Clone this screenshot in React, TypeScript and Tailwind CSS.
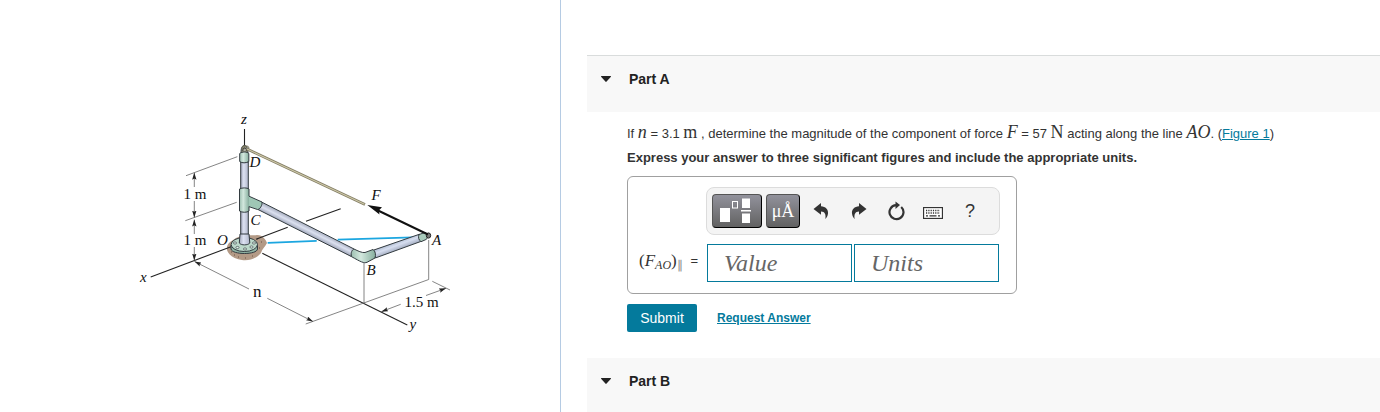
import React from "react";

const serif = "font-['Liberation_Serif',serif]";

function PipeFigure() {
  return (
    <svg
      viewBox="130 105 330 235"
      className="h-[235px] w-[330px]"
      role="img"
      aria-label="Pipe assembly with force F applied at A"
    >
      <defs>
        <linearGradient id="vpipe" x1="0" x2="1" y1="0" y2="0">
          <stop offset="0" stopColor="#a3a9bc" />
          <stop offset="0.4" stopColor="#dde2f2" />
          <stop offset="1" stopColor="#b0b6ca" />
        </linearGradient>
        <linearGradient id="joint" x1="0" x2="1" y1="0" y2="0">
          <stop offset="0" stopColor="#9dbfb1" />
          <stop offset="0.4" stopColor="#d3e8de" />
          <stop offset="1" stopColor="#86ae9e" />
        </linearGradient>
        <linearGradient id="cb" gradientUnits="userSpaceOnUse" x1="307" y1="226" x2="303.500" y2="233">
          <stop offset="0" stopColor="#b4bacb" />
          <stop offset="0.4" stopColor="#dce1f0" />
          <stop offset="1" stopColor="#9aa1b5" />
        </linearGradient>
        <linearGradient id="ba" gradientUnits="userSpaceOnUse" x1="396" y1="242" x2="399" y2="250">
          <stop offset="0" stopColor="#b3bfd3" />
          <stop offset="0.4" stopColor="#d6def0" />
          <stop offset="1" stopColor="#a0a9bd" />
        </linearGradient>
        <marker id="tip" viewBox="0 0 8 5" refX="8" refY="2.5" markerWidth="7" markerHeight="4.5" markerUnits="userSpaceOnUse" orient="auto-start-reverse">
          <path d="M0 0L8 2.5L0 5L1.5 2.5Z" fill="#222" />
        </marker>
      </defs>

      <path
        d="M227 250C226 243 232 241 236 238C243 234 252 236 257 235C263 235 266 240 267 243C265 247 262 249 261 253C257 258 250 261 242 260C235 259 229 256 227 250Z"
        fill="#b39a86"
      />
      <path d="M231 252h1M238 257h1M245 258h1M252 256h1M259 248h1M261 242h1M257 239h1M234 255h1" stroke="#6b5342" />

      <g stroke="#222" strokeWidth="1.1" fill="none">
        <path d="M150.700 277L231 246.700M256 239.300L287.700 227.300M306 221.300L340.700 208.700" />
        <path d="M262.300 253.300L407.300 325" />
        <path d="M244.500 129V148" />
      </g>
      <g stroke="#666" strokeWidth="0.8" fill="none">
        <path d="M186 175.700L237.300 156.700M185.300 220.700L236.700 202.300" />
        <path d="M364 263V303M428.700 240V279.500L305.700 324M432.300 281.300L450 290" />
        <path d="M194.300 187V172.700" markerEnd="url(#tip)" />
        <path d="M194.300 201V217.500" markerEnd="url(#tip)" />
        <path d="M194.300 234V219.500" markerEnd="url(#tip)" />
        <path d="M194.300 247V260.500" markerEnd="url(#tip)" />
        <path d="M249 289L194.500 261.500" markerEnd="url(#tip)" />
        <path d="M267.300 298.300L313 321.500" markerEnd="url(#tip)" />
        <path d="M426 295.500L446 288.300" markerEnd="url(#tip)" />
        <path d="M400.700 304.300L381.300 311.700" markerEnd="url(#tip)" />
      </g>

      <g stroke="#333b40" strokeWidth="1">
        <path d="M231 245V249C232 255 257 255 257.500 249V245Z" fill="#8fb3a3" />
        <ellipse cx="244.300" cy="244.500" rx="13.200" ry="7" fill="#bcd8ca" />
        <g strokeWidth="0.6" fill="#e4f1ea">
          <ellipse cx="235" cy="243" rx="1.600" ry="1.100" />
          <ellipse cx="237.500" cy="247.500" rx="1.600" ry="1.100" />
          <ellipse cx="245" cy="249" rx="1.600" ry="1.100" />
          <ellipse cx="251.500" cy="247" rx="1.600" ry="1.100" />
          <ellipse cx="254" cy="243" rx="1.600" ry="1.100" />
        </g>
        <rect x="240.700" y="211" width="7.600" height="24" fill="url(#vpipe)" />
        <path d="M240 234H249L249.800 243C248 245.500 241 245.500 239.300 243Z" fill="url(#vpipe)" />
        <rect x="240.700" y="162" width="7.600" height="27" fill="url(#vpipe)" />
        <path d="M261.500 202L354 249L351.300 256.500L258 209.500Z" fill="url(#cb)" />
        <path d="M267.700 242.800L316.700 240.800M337.700 239.700L413 237.300" stroke="#1ba6e0" strokeWidth="1.700" />
        <path d="M373 250.300L419.300 234.300L420.700 241.500L375.300 258Z" fill="url(#ba)" />
        <path d="M248.500 196L262 202C262.500 205 260 209.500 257.500 209.500L248.500 206.500Z" fill="#9fc6b5" />
        <path d="M239.500 189C242 187.500 247 187.500 249 189V211C247 212.700 242 212.700 239.500 211Z" fill="url(#joint)" stroke="none" />
        <path d="M249 196V189C247 187.500 242 187.500 239.500 189V211C242 212.700 247 212.700 249 211V206.500" fill="none" />
        <path d="M354 249C358 251 362 253 365 252.500L373 249.500C375.500 251 376 255 375 258L367 262.300C364 263.500 361 262 351.300 256.500C350.800 252 352 250 354 249Z" fill="url(#joint)" />
        <path d="M419 234.500L425 232.500C428 233 428.500 238 426 239.500L421 241.700C418.500 240 418 237 419 234.500Z" fill="#a9cbbb" />
        <path d="M241 153C241 148 242 145.500 244.500 145.500C247 145.500 248 149 248 153Z" fill="#8b8b76" />
        <path d="M239.700 153.500C242 151.500 247 151.500 248.800 153.500V161.500C246 163.300 242 163.300 239.700 161.500Z" fill="url(#joint)" />
      </g>
      <path d="M243 151V149.500C243 147.500 246.500 147.500 246.500 151" stroke="#222" fill="#eee" />
      <ellipse cx="245.500" cy="148" rx="3.500" ry="2.200" fill="none" stroke="#77725a" />
      <path d="M247 149L365 204.500" stroke="#827c63" strokeWidth="2.600" />
      <path d="M247 149L364.500 204.300" stroke="#cdc8a8" strokeWidth="1.100" />
      <ellipse cx="428.500" cy="235.500" rx="2.200" ry="2.600" fill="#777" stroke="#222" />
      <path d="M428 234.500L377 210" stroke="#111" strokeWidth="2" />
      <path d="M367.300 205L382 207.300L378.800 210.500L379.500 214.500Z" fill="#111" />

      <g className={serif} fontSize="15" fill="#111">
        <g fontStyle="italic">
          <text x="241" y="124">z</text>
          <text x="249.500" y="167">D</text>
          <text x="250.500" y="224.500">C</text>
          <text x="217" y="245">O</text>
          <text x="140" y="282">x</text>
          <text x="371.500" y="199.500">F</text>
          <text x="432" y="244.500">A</text>
          <text x="366.500" y="274.500">B</text>
          <text x="409.500" y="329">y</text>
        </g>
        <text x="183.500" y="199">1 m</text>
        <text x="183.500" y="245">1 m</text>
        <text x="404.500" y="306.500">1.5 m</text>
        <text x="253" y="297" fontSize="17">n</text>
      </g>
    </svg>
  );
}

function PartHeader({ title, open }: { title: string; open?: boolean }) {
  return (
    <header className={open ? "border-t border-[#d9dcdc] bg-[#f8f8f8] pt-3.5 pb-6" : "grow bg-[#f8f8f8] pt-3.5 pb-5"}>
      <h2>
        <button type="button" aria-expanded="true" className="flex items-center gap-[18px] pl-3.5 text-sm leading-[18px] font-bold text-[#222]">
          <svg viewBox="0 0 10 6" className="h-1.5 w-2.5" aria-hidden="true">
            <path d="M0.500 0H9.500Q10.500 0 9.700 0.900L5.600 5.600Q5 6.200 4.400 5.600L0.300 0.900Q-0.500 0 0.500 0Z" fill="#222" />
          </svg>
          {title}
        </button>
      </h2>
    </header>
  );
}

function Var({ children }: { children: React.ReactNode }) {
  return <i className={`${serif} text-lg leading-none`}>{children}</i>;
}

function Unit({ children }: { children: React.ReactNode }) {
  return <span className={`${serif} text-lg leading-none`}>{children}</span>;
}

const darkButton =
  "flex h-[34px] items-center justify-center rounded border border-black border-t-[#555] border-l-[#555] bg-linear-to-b from-[#92929c] to-[#626262] text-white";

const curvedArrow = "M0.500 6L8 0V3.300C12.500 3.500 15.500 6.500 15 10.500C14.800 13 13.500 15 12.300 16C13.200 12 12 8.500 8 8.500V11.800Z";

function Toolbar() {
  return (
    <div className="flex h-12 items-center rounded-lg border border-[#dcdcdc] bg-[#f4f4f4] pl-[5px] text-[#333]">
      <button type="button" aria-label="Templates" className={`${darkButton} w-[50px]`}>
        <svg viewBox="0 0 34 26" className="h-[26px] w-[34px]" aria-hidden="true">
          <path d="M0 10H10V24H0ZM22 0.500H30V10H22ZM21 12H31V13.500H21ZM22 15.500H30V25H22Z" fill="#fff" />
          <rect x="12.500" y="3.500" width="5" height="6.500" fill="none" stroke="#fff" />
        </svg>
      </button>
      <button type="button" aria-label="Symbols" className={`${darkButton} ml-1 w-[34px] ${serif} text-lg`}>
        μÅ
      </button>
      <button type="button" aria-label="Undo" className="ml-[13px]">
        <svg viewBox="0 0 16 16" className="size-4" aria-hidden="true">
          <path d={curvedArrow} fill="currentColor" />
        </svg>
      </button>
      <button type="button" aria-label="Redo" className="ml-[22px]">
        <svg viewBox="0 0 16 16" className="size-4 -scale-x-100" aria-hidden="true">
          <path d={curvedArrow} fill="currentColor" />
        </svg>
      </button>
      <button type="button" aria-label="Reset" className="ml-[19px]">
        <svg viewBox="0 0 20 20" className="size-5" aria-hidden="true">
          <path d="M15.200 6A7 7 0 1 1 10 4.200" fill="none" stroke="currentColor" strokeWidth="2.200" />
          <path d="M9.500 0.500L14 4L9.500 8Z" fill="currentColor" />
        </svg>
      </button>
      <button type="button" aria-label="Keyboard" className="mt-1 ml-[17px]">
        <svg viewBox="0 0 20 12" className="h-3 w-5" aria-hidden="true">
          <rect x="0.500" y="0.500" width="19" height="11" fill="#fff" stroke="currentColor" strokeWidth="1.300" />
          <path d="M3 3.500H17M3 6H17" stroke="currentColor" strokeWidth="1.300" strokeDasharray="1.200 1.100" />
          <path d="M3 8.800H5M6.500 8.800H13.500M15 8.800H17" stroke="currentColor" strokeWidth="1.300" />
        </svg>
      </button>
      <button type="button" aria-label="Help" className="ml-[22px] text-lg leading-5">
        ?
      </button>
    </div>
  );
}

const field = `${serif} h-[38px] w-0 grow border border-[#047a9c] bg-white px-4 text-[24px] italic text-[#333] outline-none placeholder:text-[#666]`;

export default function App() {
  return (
    <div className="flex min-h-screen bg-white font-['Liberation_Sans',Arial,sans-serif] text-[13px] text-[#333]">
      <aside className="w-[561px] shrink-0 border-r border-[#b5cbe3] pt-[105px] pl-[130px]">
        <PipeFigure />
      </aside>
      <main className="flex min-w-0 grow flex-col pt-[55px] pl-[26px]">
        <PartHeader title="Part A" open />
        <section className="px-10 pt-[11px]">
          <p className="h-5 leading-5">
            If <Var>n</Var> = 3.1 <Unit>m</Unit> , determine the magnitude of the component of force <Var>F</Var> = 57{" "}
            <Unit>N</Unit> acting along the line <Var>AO</Var>. (
            <a href="#figure-1" className="text-[#047a9c] underline">
              Figure 1
            </a>
            )
          </p>
          <p className="mt-[5px] leading-5 font-bold">
            Express your answer to three significant figures and include the appropriate units.
          </p>
          <form className="mt-2" onSubmit={(e) => e.preventDefault()}>
            <div className="grid w-[390px] max-w-full grid-cols-[78px_1fr] gap-y-[9px] rounded-md border border-[#a0a0a0] pt-2.5 pr-4 pb-[11px]">
              <div className="col-start-2">
                <Toolbar />
              </div>
              <label htmlFor="value" className="flex items-center justify-between pr-2 pl-[11px]">
                <span className={`${serif} flex items-baseline text-[17px] leading-none`}>
                  (<i>F</i>
                  <i className="text-xs">
                    <span className="align-sub">AO</span>
                  </i>
                  )
                  <span className="text-xs text-[#888]">
                    <span className="align-sub">∥</span>
                  </span>
                </span>
                <span className="pb-1">=</span>
              </label>
              <div className="flex gap-0.5 px-px">
                <input id="value" placeholder="Value" className={field} />
                <input aria-label="Units" placeholder="Units" className={field} />
              </div>
            </div>
            <div className="mt-2.5 mb-[26px] flex items-center gap-5">
              <button type="submit" className="h-7 w-[70px] rounded-xs bg-[#047a9c] text-sm text-white">
                Submit
              </button>
              <a href="#answer" className="text-xs font-bold text-[#047a9c] underline">
                Request Answer
              </a>
            </div>
          </form>
        </section>
        <PartHeader title="Part B" />
      </main>
    </div>
  );
}
